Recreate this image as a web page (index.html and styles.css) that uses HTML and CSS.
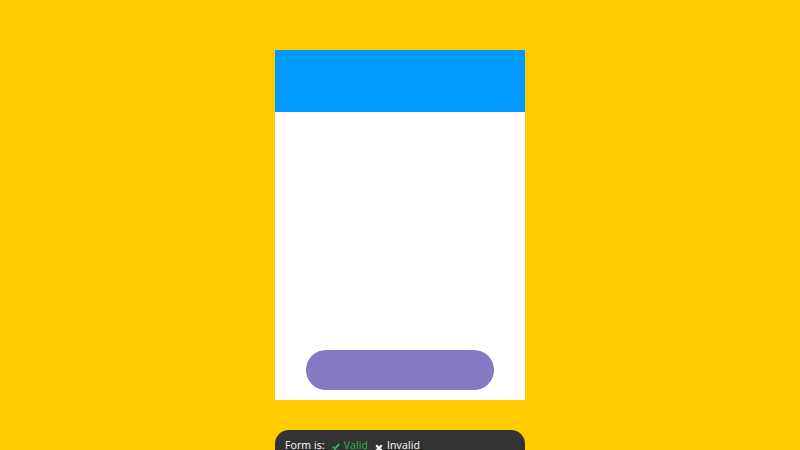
FILE: index.html
```html
<!DOCTYPE html>
<html>
<head>
<meta charset="utf-8">
<link rel="stylesheet" href="styles.css">
</head>
<body>
<div class="page">
  <div class="card">
    <div class="card-header"></div>
    <div class="card-body">
      <button class="submit" type="button"></button>
    </div>
  </div>
  <div class="status">
    <span class="label">Form is:</span>
    <span class="state valid"><svg width="8" height="7" viewBox="0 0 8 7"><path d="M0.8 3.6 L3 5.7 L7.2 1" fill="none" stroke="#2eb84b" stroke-width="1.9"/></svg>Valid</span>
    <span class="state invalid"><svg width="8" height="8" viewBox="0 0 8 8"><path d="M1.2 1.2 L6.8 6.8 M6.8 1.2 L1.2 6.8" fill="none" stroke="#ffffff" stroke-width="2.2"/></svg>Invalid</span>
  </div>
</div>
</body>
</html>
```

FILE: styles.css
```css
html, body {
  margin: 0;
  padding: 0;
  background: #ffcc00;
  height: 100%;
  overflow: hidden;
}
.page {
  display: flex;
  flex-direction: column;
  align-items: center;
  padding-top: 50px;
  font-family: "Open Sans", "Liberation Sans", sans-serif;
}
.card {
  width: 250px;
  height: 350px;
  background: #ffffff;
  display: flex;
  flex-direction: column;
}
.card-header {
  height: 62px;
  background: #0099ff;
}
.card-body {
  flex: 1;
  display: flex;
  flex-direction: column;
  justify-content: flex-end;
  align-items: center;
  padding-bottom: 10px;
}
.submit {
  width: 188px;
  height: 40px;
  border: none;
  border-radius: 20px;
  background: #8479c5;
}
.status {
  margin-top: 30px;
  width: 250px;
  box-sizing: border-box;
  height: 40px;
  background: #333333;
  border-radius: 14px 14px 0 0;
  padding: 8px 10px 0;
  color: #ffffff;
  font-size: 10.5px;
  line-height: 14px;
  letter-spacing: 0.1px;
  display: flex;
  align-items: flex-start;
}
.label {
  margin-right: 7px;
}
.state {
  display: inline-flex;
  align-items: center;
  gap: 4px;
}
.valid {
  color: #2eb84b;
  margin-right: 7px;
}
.valid svg { position: relative; top: 1px; }
.invalid svg { position: relative; top: 3px; }
```
